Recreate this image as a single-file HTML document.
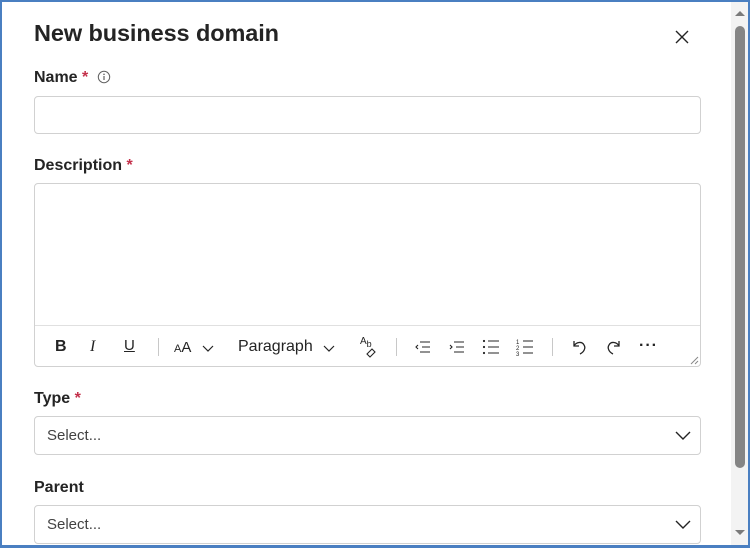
<!DOCTYPE html>
<html><head><style>
*{box-sizing:border-box;margin:0;padding:0}
body{width:750px;height:548px;overflow:hidden;background:#fff;font-family:"Liberation Sans",sans-serif;color:#242424;position:relative}
.frame{position:absolute;inset:0;border:2px solid #4a7fc1;border-bottom-width:3px}
.abs{position:absolute}
.title{left:34px;top:20px;font-size:23.5px;font-weight:600;letter-spacing:-0.1px}
.lbl{left:34px;font-size:16px;font-weight:bold;color:#242424}
.req{color:#c4314b;font-weight:bold}
.box{left:34px;width:667px;border:1px solid #d1d1d1;border-radius:4px;background:#fff}
.sel{font-size:15px;color:#424242;padding-left:12px;line-height:37px}
.tb{font-size:15px;color:#242424}
.sep{width:1px;height:18px;background:#c8c8c8;top:338px}
</style></head><body>
<div class="frame"></div>
<div class="abs title">New business domain</div>
<svg class="abs" style="left:674px;top:29px" width="16" height="16" viewBox="0 0 16 16"><path d="M2 2L14 14M14 2L2 14" stroke="#242424" stroke-width="1.4"/></svg>

<div class="abs lbl" style="top:69px">Name <span class="req">*</span></div>
<svg class="abs" style="left:97px;top:70px" width="14" height="14" viewBox="0 0 14 14"><circle cx="7" cy="7" r="5.7" fill="none" stroke="#616161" stroke-width="1"/><path d="M7 6v4" stroke="#616161" stroke-width="1.2"/><circle cx="7" cy="4.3" r=".8" fill="#616161"/></svg>
<div class="abs box" style="top:96px;height:38px"></div>

<div class="abs lbl" style="top:157px">Description <span class="req">*</span></div>
<div class="abs box" style="top:183px;height:184px"></div>
<div class="abs" style="left:35px;top:325px;width:665px;height:1px;background:#e0e0e0"></div>
<div class="abs tb" style="left:55px;top:338px;font-weight:bold;font-size:16px">B</div>
<div class="abs tb" style="left:90px;top:338px;font-style:italic;font-size:16px;font-family:'Liberation Serif',serif">I</div>
<div class="abs tb" style="left:124px;top:337px;text-decoration:underline;font-size:15px">U</div>
<div class="abs sep" style="left:158px"></div>
<div class="abs tb" style="left:174px;top:339px"><span style="font-size:11px">A</span>A</div>
<svg class="abs" style="left:201px;top:343px" width="14" height="10"><path d="M2 3l5 5 5-5" fill="none" stroke="#242424" stroke-width="1.2"/></svg>
<div class="abs tb" style="left:238px;top:338px;font-size:16px">Paragraph</div>
<svg class="abs" style="left:322px;top:343px" width="14" height="10"><path d="M2 3l5 5 5-5" fill="none" stroke="#242424" stroke-width="1.2"/></svg>
<div class="abs" style="left:360px;top:336px;font-size:10px">A<sub style="font-size:9px">b</sub></div>
<svg class="abs" style="left:364px;top:346px" width="14" height="12"><path d="M3 8l5-5 3 3-5 5z" fill="none" stroke="#242424" stroke-width="1.1"/></svg>
<div class="abs sep" style="left:396px"></div>
<svg class="abs" style="left:414px;top:340px" width="18" height="14" fill="none" stroke="#242424" stroke-width="1.1"><path d="M6 2h10M8 7h8M6 12h10M4 5L2 7l2 2"/></svg>
<svg class="abs" style="left:448px;top:340px" width="18" height="14" fill="none" stroke="#242424" stroke-width="1.1"><path d="M6 2h10M8 7h8M6 12h10M2 5l2 2-2 2"/></svg>
<svg class="abs" style="left:482px;top:339px" width="18" height="16" fill="#242424"><circle cx="2" cy="2" r="1.1"/><circle cx="2" cy="8" r="1.1"/><circle cx="2" cy="14" r="1.1"/><path d="M6 2h11M6 8h11M6 14h11" stroke="#242424" stroke-width="1.1"/></svg>
<svg class="abs" style="left:516px;top:338px" width="18" height="18" fill="none" stroke="#242424" stroke-width="1.1"><path d="M7 3h10M7 9h10M7 15h10"/><text x="0" y="6" font-size="6" fill="#242424" stroke="none">1</text><text x="0" y="12" font-size="6" fill="#242424" stroke="none">2</text><text x="0" y="18" font-size="6" fill="#242424" stroke="none">3</text></svg>
<div class="abs sep" style="left:552px"></div>
<svg class="abs" style="left:571px;top:338px" width="18" height="18" fill="none" stroke="#242424" stroke-width="1.3"><path d="M3 3v5h5M3 8c2-4 8-5 10-1 2 3 0 7-4 9"/></svg>
<svg class="abs" style="left:604px;top:338px" width="18" height="18" fill="none" stroke="#242424" stroke-width="1.3"><path d="M15 3v5h-5M15 8c-2-4-8-5-10-1-2 3 0 7 4 9"/></svg>
<div class="abs" style="left:639px;top:337px;font-size:16px;font-weight:bold;letter-spacing:1px">···</div>
<svg class="abs" style="left:689px;top:355px" width="10" height="10" stroke="#888" stroke-width="1"><path d="M9 2L2 9M9 6L6 9"/></svg>

<div class="abs lbl" style="top:390px">Type <span class="req">*</span></div>
<div class="abs box sel" style="top:416px;height:39px">Select...</div>
<svg class="abs" style="left:674px;top:429px" width="18" height="12"><path d="M2 3l7 7 7-7" fill="none" stroke="#242424" stroke-width="1.4"/></svg>

<div class="abs lbl" style="top:479px">Parent</div>
<div class="abs box sel" style="top:505px;height:39px">Select...</div>
<svg class="abs" style="left:674px;top:518px" width="18" height="12"><path d="M2 3l7 7 7-7" fill="none" stroke="#242424" stroke-width="1.4"/></svg>

<div class="abs" style="left:731px;top:2px;width:17px;height:543px;background:#f3f3f3"></div>
<svg class="abs" style="left:733px;top:8px" width="14" height="10"><path d="M2 8h10L7 3z" fill="#7a7a7a"/></svg>
<div class="abs" style="left:735px;top:26px;width:10px;height:442px;background:#858585;border-radius:5px"></div>
<svg class="abs" style="left:733px;top:528px" width="14" height="10"><path d="M2 2h10L7 7z" fill="#7a7a7a"/></svg>
</body></html>
